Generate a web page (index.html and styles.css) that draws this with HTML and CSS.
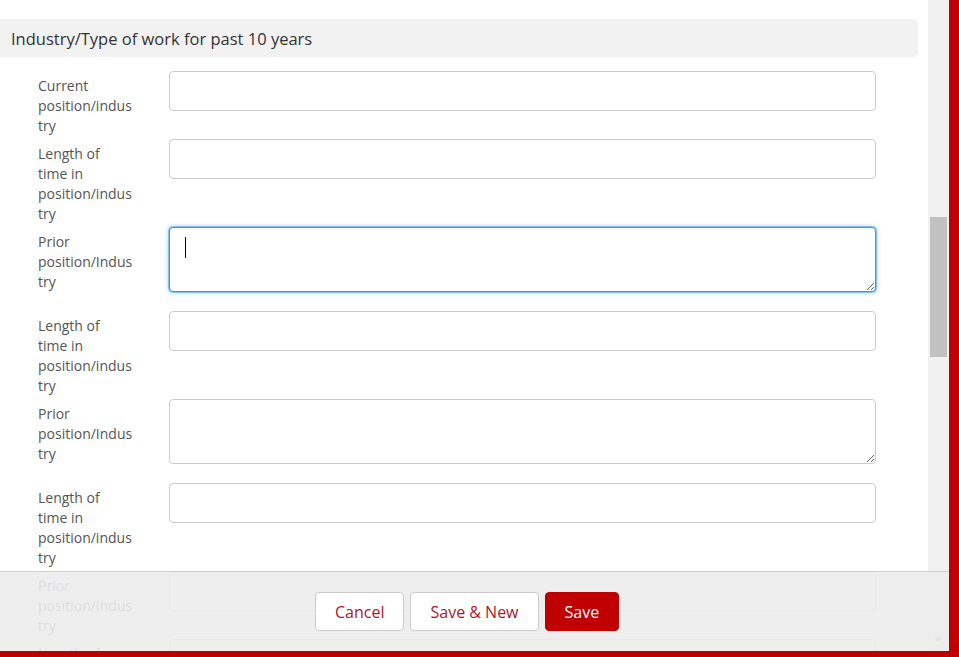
FILE: index.html
```
<!DOCTYPE html>
<html lang="en">
<head>
    <meta charset="UTF-8">
    <meta name="viewport" content="width=device-width, initial-scale=1.0">
    <title>Industry / Type of work</title>
    <link rel="stylesheet" href="styles.css">
</head>
<body>
    <div class="frame">
        <div class="viewport">
            <div class="page">
                <div class="section-title">Industry/Type of work for past 10 years</div>

                <div class="form-row">
                    <label class="form-label">Current<br>position/indus<br>try</label>
                    <input class="form-input" type="text">
                </div>
                <div class="form-row">
                    <label class="form-label">Length of<br>time in<br>position/indus<br>try</label>
                    <input class="form-input" type="text">
                </div>
                <div class="form-row">
                    <label class="form-label">Prior<br>position/Indus<br>try</label>
                    <div class="area-wrap">
                        <textarea class="form-area focused"></textarea>
                        <span class="caret"></span>
                    </div>
                </div>
                <div class="form-row">
                    <label class="form-label">Length of<br>time in<br>position/indus<br>try</label>
                    <input class="form-input" type="text">
                </div>
                <div class="form-row">
                    <label class="form-label">Prior<br>position/Indus<br>try</label>
                    <div class="area-wrap">
                        <textarea class="form-area"></textarea>
                    </div>
                </div>
                <div class="form-row">
                    <label class="form-label">Length of<br>time in<br>position/indus<br>try</label>
                    <input class="form-input" type="text">
                </div>
                <div class="form-row">
                    <label class="form-label">Prior<br>position/Indus<br>try</label>
                    <input class="form-input" type="text">
                </div>
                <div class="form-row">
                    <label class="form-label">Length of<br>time in<br>position/indus<br>try</label>
                    <input class="form-input" type="text">
                </div>
            </div>

            <div class="scrollbar">
                <div class="scroll-thumb"></div>
                <span class="scroll-arrow"></span>
            </div>

            <div class="footer">
                <button class="btn btn-light">Cancel</button>
                <button class="btn btn-light">Save &amp; New</button>
                <button class="btn btn-primary">Save</button>
            </div>
        </div>
    </div>
</body>
</html>
```

FILE: styles.css
```
        * {
            box-sizing: border-box;
        }

        body {
            margin: 0;
            padding: 0;
            font-family: "Open Sans", "Noto Sans", Arial, sans-serif;
            background-color: #c00000;
        }

        .frame {
            height: 657px;
            padding: 0 10px 6px 0;
            background-color: #c00000;
        }

        .viewport {
            position: relative;
            display: flex;
            height: 651px;
            overflow: hidden;
            background-color: #fff;
        }

        .page {
            width: 928px;
            padding-top: 19px;
        }

        .section-title {
            width: 918px;
            height: 38px;
            padding-left: 11px;
            line-height: 40px;
            font-size: 16.5px;
            color: #333;
            background-color: #f2f2f2;
            border-radius: 0 5px 5px 0;
            margin-bottom: 14px;
        }

        .form-row {
            display: flex;
            align-items: flex-start;
            padding-left: 38px;
        }

        .form-label {
            width: 131px;
            padding: 5px 0 3px;
            font-size: 14px;
            line-height: 20px;
            color: #555;
        }

        .form-input {
            display: block;
            width: 707px;
            height: 40px;
            border: 1px solid #ccc;
            border-radius: 4px;
            background-color: #fff;
            outline: none;
        }

        .area-wrap {
            position: relative;
            margin-bottom: 19px;
        }

        .form-area {
            display: block;
            width: 707px;
            height: 65px;
            border: 1px solid #ccc;
            border-radius: 4px;
            background-color: #fff;
            outline: none;
            resize: vertical;
            font-family: inherit;
        }

        .form-area.focused {
            border-color: #3d97dc;
            box-shadow: 0 0 0 1px rgba(80, 160, 225, 0.55), 0 0 5px rgba(102, 175, 233, 0.8);
        }

        .caret {
            position: absolute;
            left: 16px;
            top: 10px;
            width: 1px;
            height: 21px;
            background-color: #000;
        }

        .scrollbar {
            position: relative;
            width: 21px;
            background-color: #f1f1f1;
            padding-left: 2px;
        }

        .scroll-thumb {
            width: 17px;
            height: 140px;
            margin-top: 217px;
            background-color: #c1c1c1;
        }

        .scroll-arrow {
            position: absolute;
            left: 6px;
            bottom: 9px;
            border-left: 4px solid transparent;
            border-right: 4px solid transparent;
            border-top: 5px solid #a3a3a3;
        }

        .footer {
            position: absolute;
            left: 0;
            right: 0;
            bottom: 0;
            height: 80px;
            display: flex;
            align-items: flex-start;
            gap: 6px;
            padding: 20px 0 0 315px;
            background-color: rgba(236, 236, 236, 0.9);
            border-top: 1px solid rgba(0, 0, 0, 0.12);
        }

        .btn {
            height: 39px;
            padding: 0 19px;
            font-family: inherit;
            font-size: 16px;
            border-radius: 4px;
            cursor: pointer;
        }

        .btn-light {
            background-color: #fff;
            color: #a8182c;
            border: 1px solid #ccc;
        }

        .btn-primary {
            background-color: #c00000;
            color: #fff;
            border: 1px solid #c00000;
        }
```
